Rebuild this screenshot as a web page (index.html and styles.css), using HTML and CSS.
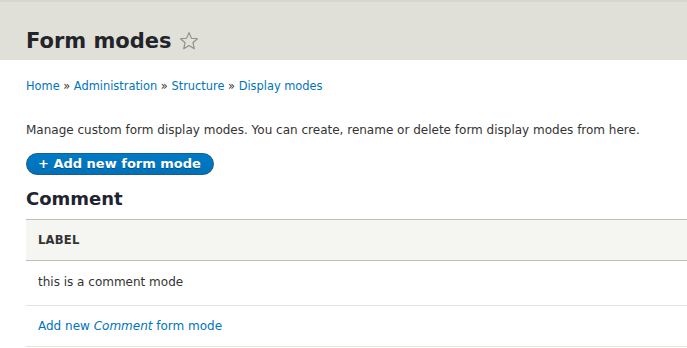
FILE: index.html
```html
<!DOCTYPE html>
<html>
<head>
    <title>Form modes</title>
    <meta http-equiv="Content-Type" content="text/html; charset=utf-8"/>
    <link rel="stylesheet" href="styles.css">
</head>
<body>
    <header class="page-header">
        <h1 class="page-title">Form modes <span class="shortcut-star">
            <svg width="20" height="20" viewBox="0 0 20 20"><path d="M10 1.6l2.45 5.6 6.05.55-4.6 4 1.4 5.95L10 14.55 4.7 17.7l1.4-5.95-4.6-4 6.05-.55z" fill="none" stroke="#8e8e85" stroke-width="1.1" stroke-linejoin="round"/></svg>
        </span></h1>
    </header>
    <div class="main-panel">
        <nav class="breadcrumb">
            <a href="#">Home</a> » <a href="#">Administration</a> » <a href="#">Structure</a> » <a href="#">Display modes</a>
        </nav>
        <p class="help">Manage custom form display modes. You can create, rename or delete form display modes from here.</p>
        <a class="button-action" href="#">+ Add new form mode</a>
        <h2 class="group-title">Comment</h2>
        <table class="modes">
            <thead>
                <tr><th>Label</th></tr>
            </thead>
            <tbody>
                <tr class="mode-row"><td>this is a comment mode</td></tr>
                <tr class="add-row"><td><a href="#">Add new <em>Comment</em> form mode</a></td></tr>
            </tbody>
        </table>
    </div>
</body>
</html>
```

FILE: styles.css
```css
html {
    height: 100%;
}

body {
    margin: 0;
    padding: 0;
    overflow: hidden;
    font-family: 'DejaVu Sans', sans-serif;
    font-size: 12px;
    color: #333333;
    background: #ffffff;
}

a {
    color: #0074bd;
    text-decoration: none;
}

.page-header {
    background: #e0e0d8;
    border-top: 2px solid #d6d6ce;
    height: 58px;
    padding: 0 26px;
    box-sizing: content-box;
}

.page-title {
    margin: 0;
    padding-top: 25px;
    font-size: 21px;
    line-height: 28px;
    font-weight: bold;
    color: #232429;
    display: flex;
    align-items: center;
}

.shortcut-star {
    display: inline-flex;
    margin-left: 7px;
}

.main-panel {
    padding: 0 0 0 26px;
}

.breadcrumb {
    font-size: 11.4px;
    padding-top: 18px;
    line-height: 16px;
    color: #333;
}

.help {
    margin: 27px 0 14px;
    font-size: 12px;
    line-height: 18px;
}

.button-action {
    display: inline-block;
    background: linear-gradient(#007bc6, #0071b8);
    border: 1px solid #1e5c90;
    color: #ffffff;
    font-weight: bold;
    font-size: 13px;
    line-height: 20px;
    padding: 0 12px 0 11px;
    border-radius: 20px;
    text-shadow: 0 1px rgba(0, 0, 0, 0.3);
}

.group-title {
    margin: 13px 0 9px;
    font-size: 18px;
    line-height: 22px;
    font-weight: bold;
    color: #222330;
}

table.modes {
    width: 100%;
    border-collapse: collapse;
    border-spacing: 0;
}

.modes th {
    background: #f5f5f2;
    border-top: 1px solid #bfbfba;
    border-bottom: 1px solid #bfbfba;
    text-align: left;
    text-transform: uppercase;
    font-size: 11.6px;
    font-weight: bold;
    letter-spacing: 0.2px;
    color: #333;
    padding: 0 12px;
    height: 40px;
}

.modes td {
    border-bottom: 1px solid #e6e4df;
    padding: 0 12px;
    font-size: 12px;
}

.mode-row td {
    height: 41px;
    padding-bottom: 3px;
}

.add-row td {
    height: 40px;
}
```
